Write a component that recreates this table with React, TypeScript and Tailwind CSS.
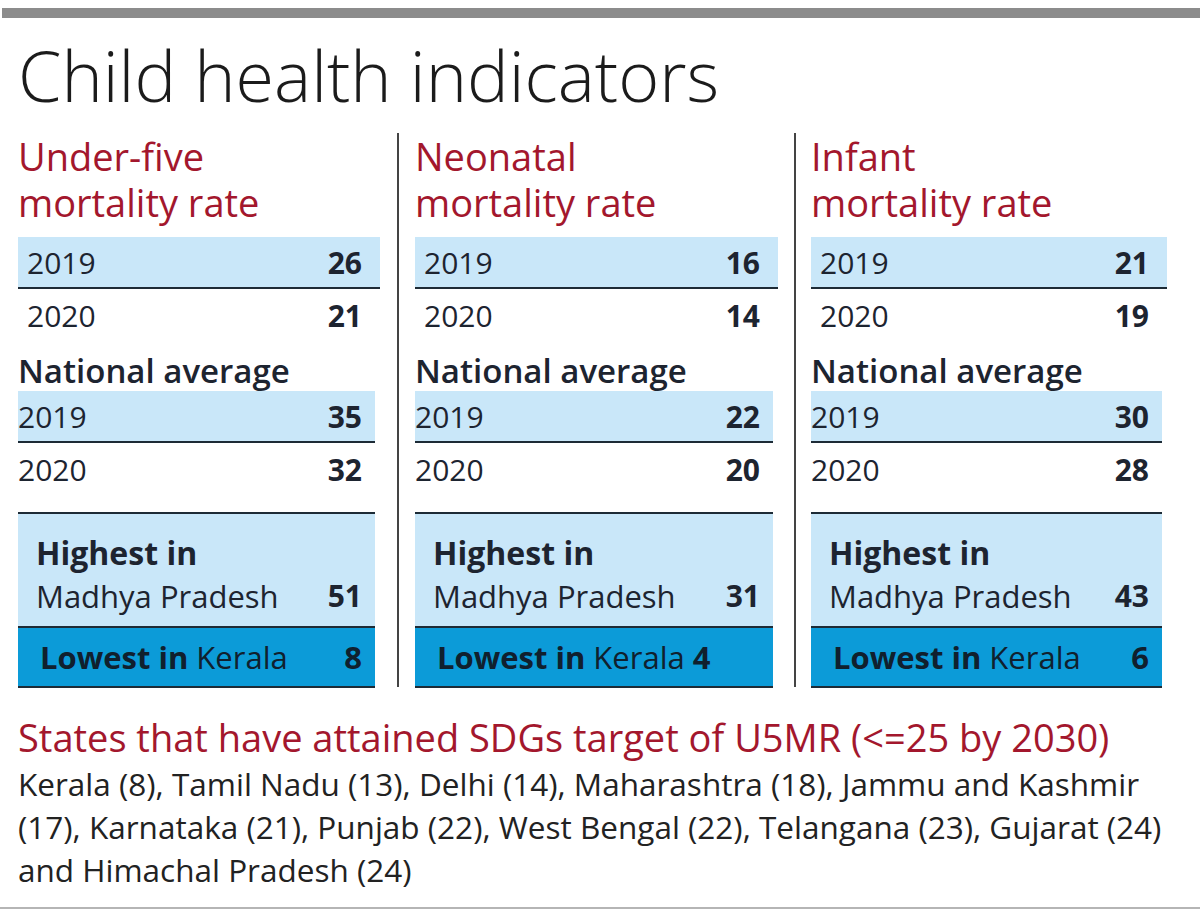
import React from 'react';

type Col = {
  title: [string, string];
  state: [string, string];
  national: [string, string];
  highest: string;
  lowest: string;
  lowestInline?: boolean;
};

const cols: Col[] = [
  { title: ['Under-five', 'mortality rate'], state: ['26', '21'], national: ['35', '32'], highest: '51', lowest: '8' },
  { title: ['Neonatal', 'mortality rate'], state: ['16', '14'], national: ['22', '20'], highest: '31', lowest: '4', lowestInline: true },
  { title: ['Infant', 'mortality rate'], state: ['21', '19'], national: ['30', '28'], highest: '43', lowest: '6' },
];

const font = { fontFamily: '"Open Sans", "Noto Sans", sans-serif' };

const Row = ({ year, value, blue, cls }: { year: string; value: string; blue?: boolean; cls: string }) => (
  <div
    className={`flex items-center justify-between h-[52px] ${cls} ${
      blue ? 'bg-[#c9e7f9] border-b-2 border-[#1d2b36]' : ''
    }`}
  >
    <span className="text-[30px] text-[#1d2430]">{year}</span>
    <span className="text-[30px] font-bold text-[#1d2430]">{value}</span>
  </div>
);

const Column = ({ c }: { c: Col }) => (
  <div className="flex flex-col">
    <h2 className="text-[38px] leading-[46px] text-[#a3172d]">
      <span className="block">{c.title[0]}</span>
      <span className="block">{c.title[1]}</span>
    </h2>
    {/* state table is a touch wider than the blocks below it */}
    <div className="mt-[12px] mr-[-5px]">
      <Row year="2019" value={c.state[0]} blue cls="pl-[9px] pr-[18px]" />
      <Row year="2020" value={c.state[1]} cls="pl-[9px] pr-[18px]" />
    </div>
    <div className="text-[33px] font-semibold text-[#1d2430] leading-[40px] mt-[10px]">National average</div>
    <div>
      <Row year="2019" value={c.national[0]} blue cls="pr-[13px]" />
      <Row year="2020" value={c.national[1]} cls="pr-[13px]" />
    </div>
    <div className="mt-[17px] border-t-2 border-b-2 border-[#1d2b36]">
      <div className="bg-[#c9e7f9] pl-[18px] pr-[13px] pt-[18px] pb-[8px] border-b-2 border-[#1d2b36]">
        <div className="text-[32px] font-bold text-[#1d2430] leading-[42px]">Highest in</div>
        <div className="flex justify-between text-[31px] text-[#1d2430] leading-[44px]">
          <span>Madhya Pradesh</span>
          <span className="font-bold text-[30px]">{c.highest}</span>
        </div>
      </div>
      <div className="bg-[#0c9bd8] h-[58px] flex items-center justify-between pl-[22px] pr-[13px] text-[31px] text-[#10202e]">
        <span>
          <span className="font-bold">Lowest in</span> Kerala
          {c.lowestInline && <span className="font-bold"> {c.lowest}</span>}
        </span>
        {!c.lowestInline && <span className="font-bold">{c.lowest}</span>}
      </div>
    </div>
  </div>
);

export default function App() {
  return (
    <div className="w-[1200px] h-[914px] bg-white overflow-hidden flex flex-col" style={font}>
      <div className="ml-[2px] mt-[8px] h-[10px] bg-[#8c8c8c]" />
      <h1 className="text-[70px] font-light text-[#1b1b1b] leading-[90px] pl-[18px] mt-[12px]">
        Child health indicators
      </h1>
      <div className="flex pl-[18px] mt-[13px]">
        <div className="w-[357px]">
          <Column c={cols[0]} />
        </div>
        <div className="w-[2px] bg-[#444] ml-[22px] mr-[16px] h-[554px]" />
        <div className="w-[358px]">
          <Column c={cols[1]} />
        </div>
        <div className="w-[2px] bg-[#444] ml-[21px] mr-[15px] h-[554px]" />
        <div className="w-[351px]">
          <Column c={cols[2]} />
        </div>
      </div>
      <div className="pl-[18px] pr-[10px] mt-[26px]">
        <h3 className="text-[38px] text-[#a3172d] leading-[46px]">
          States that have attained SDGs target of U5MR (&lt;=25 by 2030)
        </h3>
        <p className="text-[31.5px] text-[#222] leading-[43px] mt-[2px] whitespace-nowrap">
          Kerala (8), Tamil Nadu (13), Delhi (14), Maharashtra (18), Jammu and Kashmir
          <br />
          (17), Karnataka (21), Punjab (22), West Bengal (22), Telangana (23), Gujarat (24)
          <br />
          and Himachal Pradesh (24)
        </p>
      </div>
      <div className="mt-auto mb-[5px] h-[2px] bg-[#b5b5b5]" />
    </div>
  );
}
